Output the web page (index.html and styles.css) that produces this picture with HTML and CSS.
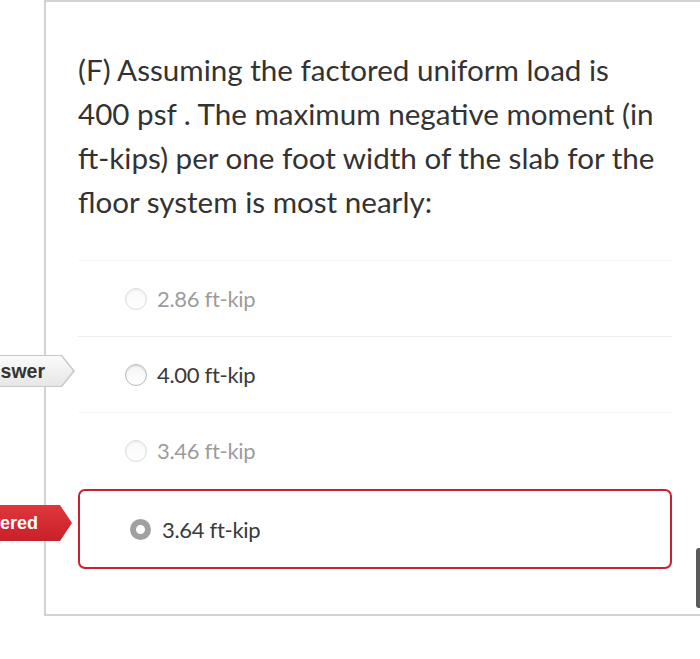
FILE: index.html
```html
<!DOCTYPE html>
<html>
<head>
<meta charset="utf-8">
<link rel="stylesheet" href="styles.css">
</head>
<body>
<div class="stage">
  <div class="card">
    <p class="question">(F) Assuming the factored uniform load is 400 psf . The maximum negative moment (in <span class="nowrap">ft-kips)</span> per one foot width of the slab for the floor system is most nearly:</p>
    <div class="answers">
      <div class="answer faded"><span class="radio"></span><span class="label">2.86 ft-kip</span></div>
      <div class="answer"><span class="radio"></span><span class="label">4.00 ft-kip</span></div>
      <div class="answer faded"><span class="radio"></span><span class="label">3.46 ft-kip</span></div>
      <div class="answer chosen"><span class="radio checked"></span><span class="label">3.64 ft-kip</span></div>
    </div>
  </div>
  <div class="tag tag-correct"><div class="tag-inner">Correct Answer</div></div>
  <div class="tag tag-answered"><div class="tag-inner">You Answered</div></div>
  <div class="scrollbar"></div>
</div>
</body>
</html>
```
FILE: styles.css
```css
html, body {
  margin: 0;
  padding: 0;
  background: #ffffff;
  overflow: hidden;
}
.stage {
  position: relative;
  width: 700px;
  height: 659px;
  overflow: hidden;
  font-family: Lato, "Open Sans", sans-serif;
}
.card {
  margin-left: 44px;
  width: 720px;
  box-sizing: border-box;
  border: 2px solid #d2d2d4;
  border-right: none;
  padding: 46px 0 45px 32px;
  background: #fff;
}
.question {
  margin: 0;
  width: 584px;
  font-size: 29.6px;
  line-height: 44px;
  color: #333;
}
.nowrap {
  white-space: nowrap;
}
.answers {
  margin-top: 36px;
  width: 594px;
}
.answer {
  display: flex;
  align-items: center;
  gap: 10px;
  height: 76px;
  box-sizing: border-box;
  border-top: 1px solid #f0eced;
  padding-left: 47px;
  font-size: 22px;
  color: #3a3a3a;
  letter-spacing: -0.3px;
}
.answer.faded {
  opacity: 0.5;
}
.answer.chosen {
  height: 80px;
  border: 2px solid #c9222e;
  border-radius: 7px;
  padding-left: 50px;
  gap: 11px;
  margin-top: 1px;
}
.radio {
  width: 20px;
  height: 20px;
  border-radius: 50%;
  border: 1px solid #b9b9b9;
  background: linear-gradient(#f4f4f4, #ffffff);
  box-shadow: inset 0 1px 2px rgba(0,0,0,0.12);
  flex: none;
}
.radio.checked {
  width: 21px;
  height: 21px;
  box-sizing: border-box;
  border: 6px solid #a0a0a0;
  background: #fff;
  box-shadow: none;
}
.tag {
  position: absolute;
}
.tag-inner {
  white-space: nowrap;
  font-family: "Liberation Sans", Arial, sans-serif;
  font-weight: bold;
  display: flex;
  align-items: center;
  justify-content: flex-end;
  box-sizing: border-box;
}
.tag-correct {
  left: -100px;
  top: 355px;
  width: 175px;
  height: 32px;
  background: #c8c8c8;
  clip-path: polygon(0 0, 162px 0, 175px 16px, 162px 32px, 0 32px);
}
.tag-correct .tag-inner {
  margin: 1px 0 0 0;
  width: 173px;
  height: 30px;
  padding-right: 28px;
  font-size: 19.5px;
  color: #333;
  background: linear-gradient(#fbfbfb, #e6e6e6);
  clip-path: polygon(0 0, 161px 0, 173px 15px, 161px 30px, 0 30px);
}
.tag-answered {
  left: -110px;
  top: 505px;
  width: 182px;
  height: 36px;
  clip-path: polygon(0 0, 170px 0, 182px 18px, 170px 36px, 0 36px);
}
.tag-answered .tag-inner {
  width: 182px;
  height: 36px;
  padding-right: 34px;
  font-size: 18px;
  color: #fff;
  background: linear-gradient(#e0363c, #c8202a);
}
.scrollbar {
  position: absolute;
  left: 696px;
  top: 548px;
  width: 6px;
  height: 60px;
  border-radius: 3px;
  background: #5a5a5a;
}
```
